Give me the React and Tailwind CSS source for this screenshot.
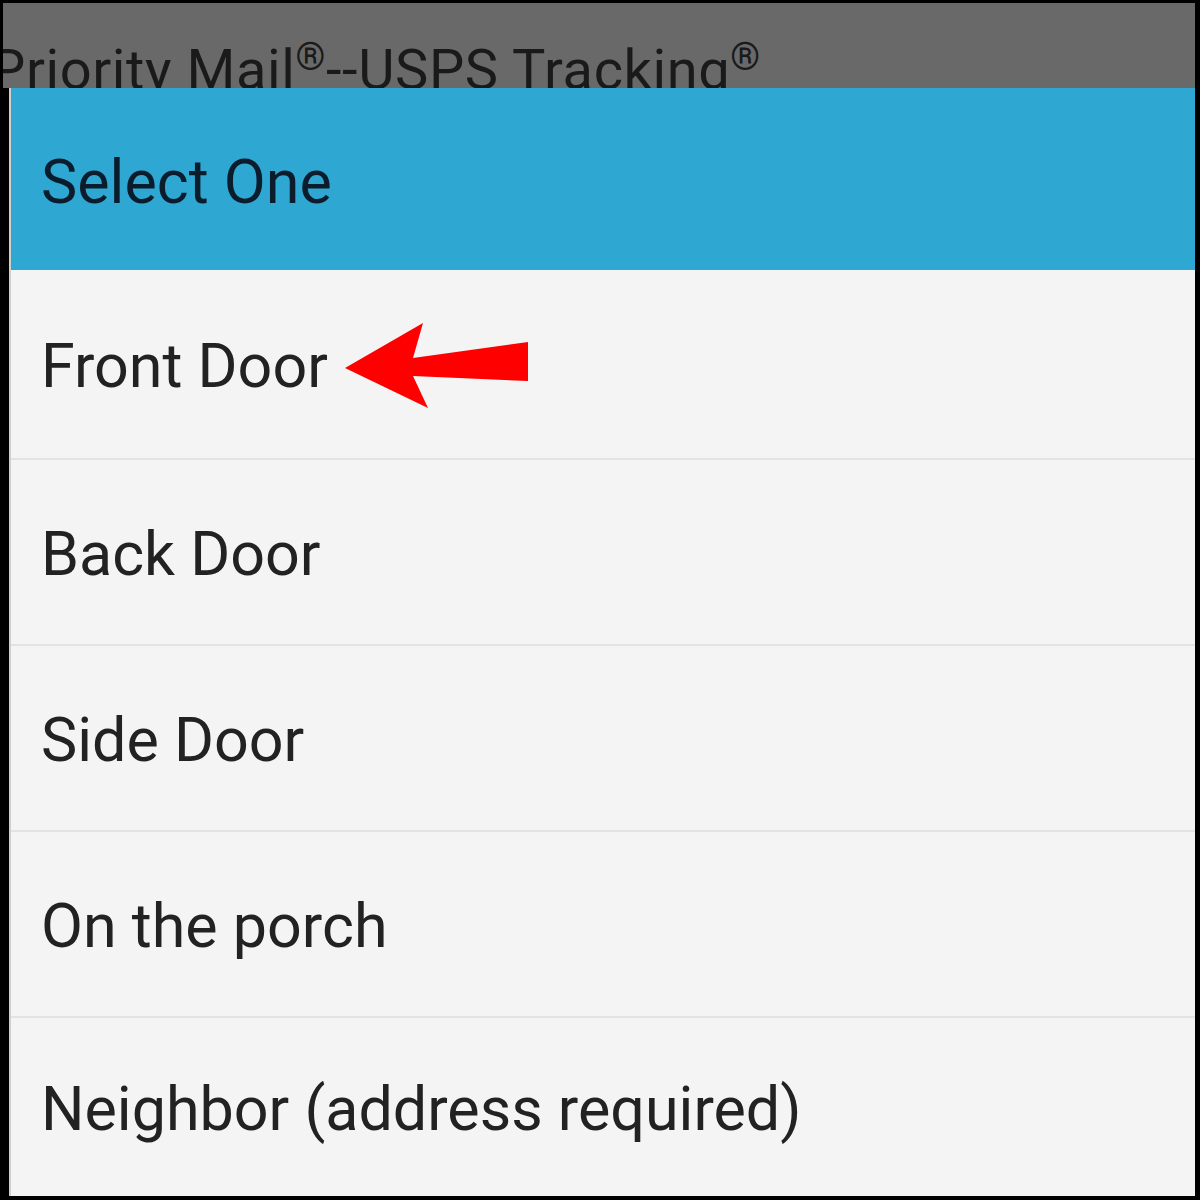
import React from "react";

const options = ["Front Door", "Back Door", "Side Door", "On the porch", "Neighbor (address required)"];

const Arrow = () => (
    <svg width="190" height="90" viewBox="340 322 190 90" className="ml-[12px] mt-[2px]">
        <polygon points="345,370 423,325 413,360 528,344 528,383 413,378 428,410" fill="#ff0000" />
    </svg>
);

const App = () => {
    return (
        <main className="w-[1200px] h-[1200px] bg-black pt-[3px] pl-[3px] pr-[5px] pb-[4px] flex flex-col" style={{ fontFamily: "Roboto, 'Noto Sans', sans-serif" }}>
            <div className="h-[85px] shrink-0 bg-[#696969] overflow-hidden relative">
                <p className="absolute left-[-13px] top-[39px] text-[56px] leading-none text-[#1a1a1a] whitespace-nowrap tracking-[0.6px]">
                    Priority Mail<sup className="text-[38px]">®</sup>--USPS Tracking<sup className="text-[38px]">®</sup>
                </p>
            </div>
            <div className="flex-1 ml-[6px] flex flex-col bg-[#f4f4f4] border-l-[2px] border-[#cfcfcf]">
                <div className="h-[182px] shrink-0 bg-[#2ea8d3] flex items-center pl-[30px]">
                    <span className="text-[61px] text-[#0b1d2c] pt-[8px]">Select One</span>
                </div>
                {options.map((opt, i) => (
                    <div key={opt} className={`flex items-center pl-[30px] ${i === 0 ? "h-[188px]" : i === 4 ? "flex-1 border-t-2 border-[#e3e3e3]" : "h-[186px] border-t-2 border-[#e3e3e3]"}`}>
                        <span className="text-[61px] text-[#222222] pt-[6px]">{opt}</span>
                        {i === 0 && <Arrow />}
                    </div>
                ))}
            </div>
        </main>
    );
};

export default App;
